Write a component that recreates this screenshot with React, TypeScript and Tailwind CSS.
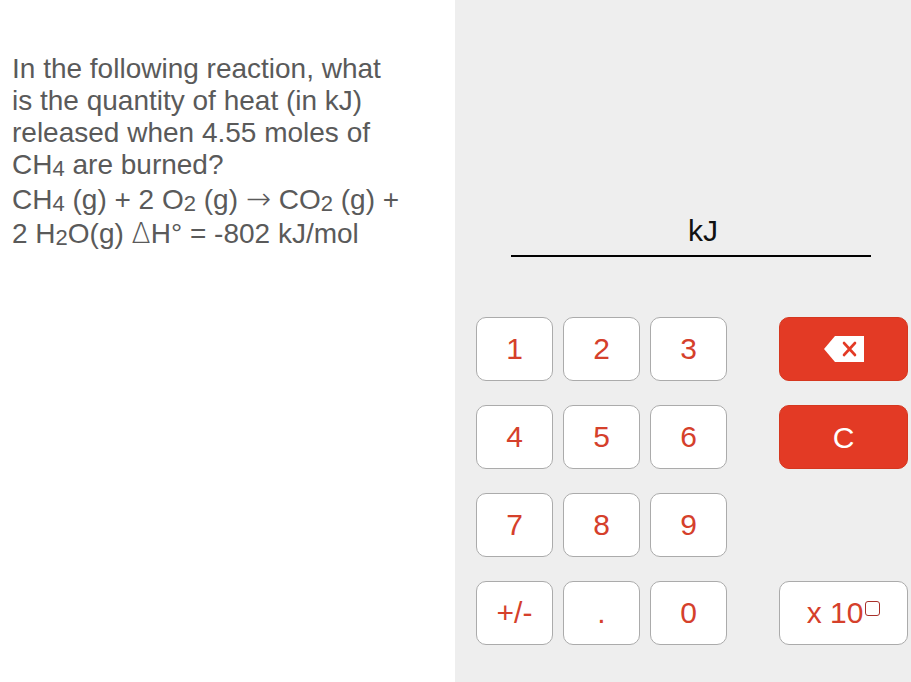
import React from "react"

const digitBtn =
  "h-[64px] w-[77px] rounded-[10px] border border-[#ababab] bg-white text-[30px] leading-none text-[#d5402b] flex items-center justify-center"

function Sub({ children }: { children: React.ReactNode }) {
  return <span className="relative top-[2px] text-[22px]">{children}</span>
}

function BackspaceIcon() {
  return (
    <svg width="40" height="26" viewBox="0 0 40 26">
      <path d="M11 0 H40 V26 H11 L0 13 Z" fill="#ffffff" />
      <path d="M20 7 L31 19 M31 7 L20 19" stroke="#e33a25" strokeWidth="2.6" strokeLinecap="round" />
    </svg>
  )
}

export default function App() {
  const rows = [
    ["1", "2", "3"],
    ["4", "5", "6"],
    ["7", "8", "9"],
    ["+/-", ".", "0"],
  ]

  return (
    <div className="flex h-[682px] w-[911px] overflow-hidden" style={{ fontFamily: '"Liberation Sans", Arial, sans-serif' }}>
      <div className="w-[455px] shrink-0 bg-white pl-[12px] pt-[53px] text-[28px] leading-[32px] text-[#5a5a5a]">
        <p className="whitespace-nowrap">
          In the following reaction, what
          <br />
          is the quantity of heat (in kJ)
          <br />
          released when 4.55 moles of
          <br />
          CH<Sub>4</Sub> are burned?
          <br />
          CH<Sub>4</Sub> (g) + 2 O<Sub>2</Sub> (g) <span className="font-['DejaVu_Sans'] text-[30px] font-extralight">→</span> CO<Sub>2</Sub> (g) +
          <br />
          2 H<Sub>2</Sub>O(g) <span className="font-['DejaVu_Sans'] font-extralight">Δ</span>H° = -802 kJ/mol
        </p>
      </div>

      <div className="flex-1 bg-[#eeeeee] pt-[215px]">
        <div className="ml-[56px] flex h-[42px] w-[360px] justify-center border-b-2 border-black pl-[24px]">
          <span className="text-[30px] leading-[32px] text-[#111111]">kJ</span>
        </div>

        <div className="ml-[21px] mt-[60px] flex flex-col gap-[24px]">
          {rows.map((row, i) => (
            <div key={i} className="flex gap-[10px]">
              {row.map((k) => (
                <button key={k} className={digitBtn}>
                  {k}
                </button>
              ))}
              <div className="ml-[42px]">
                {i === 0 && (
                  <button className="flex h-[64px] w-[129px] items-center justify-center rounded-[10px] border border-[#d5371f] bg-[#e33a25]">
                    <BackspaceIcon />
                  </button>
                )}
                {i === 1 && (
                  <button className="flex h-[64px] w-[129px] items-center justify-center rounded-[10px] border border-[#d5371f] bg-[#e33a25] text-[30px] text-white">
                    C
                  </button>
                )}
                {i === 3 && (
                  <button className="flex h-[64px] w-[129px] items-center justify-center rounded-[10px] border border-[#ababab] bg-white text-[30px] leading-none text-[#d5402b]">
                    <span>x 10</span>
                    <span className="relative -top-[5px] ml-[2px] inline-block h-[15px] w-[15px] rounded-[3px] border-[1.5px] border-[#a8302a]" />
                  </button>
                )}
              </div>
            </div>
          ))}
        </div>
      </div>
    </div>
  )
}
